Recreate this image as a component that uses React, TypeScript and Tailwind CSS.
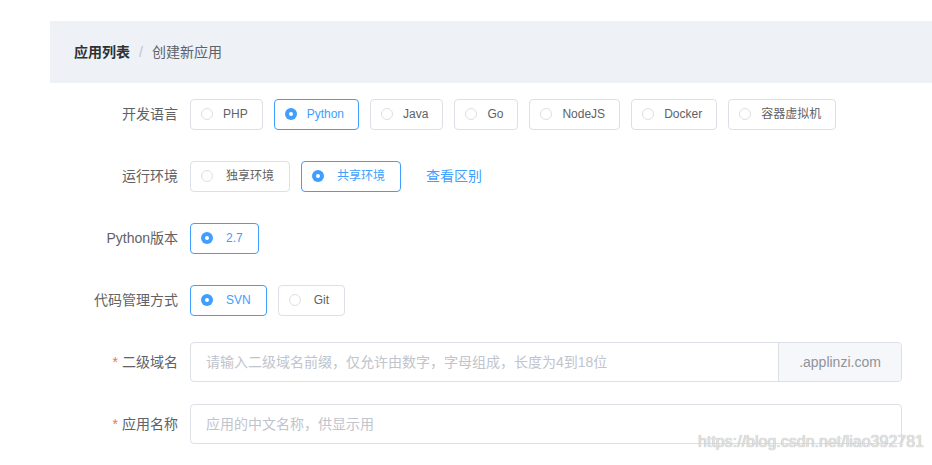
import { useState } from 'react';

const font = { fontFamily: '"Liberation Sans", "Noto Sans CJK SC", sans-serif' };

type Opt = { value: string; label: string };

const LANGUES: Opt[] = [
  { value: 'php', label: 'PHP' },
  { value: 'python', label: 'Python' },
  { value: 'java', label: 'Java' },
  { value: 'go', label: 'Go' },
  { value: 'node', label: 'NodeJS' },
  { value: 'docker', label: 'Docker' },
  { value: 'vm', label: '容器虚拟机' },
];

const ENVS: Opt[] = [
  { value: 'dedie', label: '独享环境' },
  { value: 'partage', label: '共享环境' },
];

const VERSIONS: Opt[] = [{ value: '2.7', label: '2.7' }];

const SCM: Opt[] = [
  { value: 'svn', label: 'SVN' },
  { value: 'git', label: 'Git' },
];

// La rangée des langages est plus serrée que les autres dans la maquette.
function Radio({ opt, actif, serre, onClick }: { opt: Opt; actif: boolean; serre: boolean; onClick: () => void }) {
  return (
    <button
      type="button"
      onClick={onClick}
      className={`flex h-[31px] items-center rounded-[4px] border pl-[10px] text-[12px] ${
        serre ? 'gap-[10px] pr-[14px]' : 'gap-[13px] pr-[15px]'
      } ${actif ? 'border-[#409eff] text-[#409eff]' : 'border-[#dcdfe6] text-[#606266]'}`}
    >
      {actif ? (
        <span className="flex h-[12px] w-[12px] items-center justify-center rounded-full bg-[#409eff]">
          <span className="h-[4px] w-[4px] rounded-full bg-white" />
        </span>
      ) : (
        <span className="h-[12px] w-[12px] rounded-full border border-[#dcdfe6] bg-white" />
      )}
      <span>{opt.label}</span>
    </button>
  );
}

function Groupe({ options, init, serre = false }: { options: Opt[]; init: string; serre?: boolean }) {
  const [val, setVal] = useState(init);
  return (
    <div className="flex items-center gap-[11px]">
      {options.map((o) => (
        <Radio key={o.value} opt={o} actif={val === o.value} serre={serre} onClick={() => setVal(o.value)} />
      ))}
    </div>
  );
}

function Ligne({ libelle, requis = false, children }: { libelle: string; requis?: boolean; children: React.ReactNode }) {
  return (
    <div className="flex h-10 items-center">
      <label className="w-[140px] shrink-0 pr-3 text-right text-[14px] text-[#606266]">
        {requis && <span className="mr-1 text-[#f56c6c]">*</span>}
        {libelle}
      </label>
      <div className="flex flex-1 items-center">{children}</div>
    </div>
  );
}

export default function App() {
  return (
    <div className="relative h-[465px] w-[932px] overflow-hidden bg-white" style={font}>
      <div className="pt-[21px]">
        {/* fil d'Ariane */}
        <div className="ml-[50px] flex h-[62px] items-center bg-[#eef1f6] pl-6 text-[14px]">
          <span className="font-bold text-[#303133]">应用列表</span>
          <span className="mx-[9px] text-[#c0c4cc]">/</span>
          <span className="text-[#606266]">创建新应用</span>
        </div>

        <div className="ml-[50px] mr-[30px] mt-[11px] flex flex-col gap-[22px]">
          <Ligne libelle="开发语言">
            <Groupe options={LANGUES} init="python" serre />
          </Ligne>

          <Ligne libelle="运行环境">
            <Groupe options={ENVS} init="partage" />
            <a className="ml-[25px] cursor-pointer text-[14px] text-[#409eff]">查看区别</a>
          </Ligne>

          <Ligne libelle="Python版本">
            <Groupe options={VERSIONS} init="2.7" />
          </Ligne>

          <Ligne libelle="代码管理方式">
            <Groupe options={SCM} init="svn" />
          </Ligne>

          <Ligne libelle="二级域名" requis>
            <div className="flex h-10 w-full overflow-hidden rounded-[4px] border border-[#dcdfe6]">
              <input
                className="min-w-0 flex-1 px-[15px] text-[14px] text-[#606266] outline-none placeholder:text-[#c0c4cc]"
                placeholder="请输入二级域名前缀，仅允许由数字，字母组成，长度为4到18位"
              />
              <div className="flex w-[123px] shrink-0 items-center justify-center border-l border-[#dcdfe6] bg-[#f5f7fa] text-[14px] text-[#909399]">
                .applinzi.com
              </div>
            </div>
          </Ligne>

          <Ligne libelle="应用名称" requis>
            <input
              className="h-10 w-full rounded-[4px] border border-[#dcdfe6] px-[15px] text-[14px] text-[#606266] outline-none placeholder:text-[#c0c4cc]"
              placeholder="应用的中文名称，供显示用"
            />
          </Ligne>
        </div>
      </div>

      {/* filigrane */}
      <span
        className="pointer-events-none absolute bottom-[11px] right-[8px] text-[16px] text-[#e4e4e4]"
        style={{ textShadow: '0 0 1px #9a9a9a' }}
      >
        https://blog.csdn.net/liao392781
      </span>
    </div>
  );
}
